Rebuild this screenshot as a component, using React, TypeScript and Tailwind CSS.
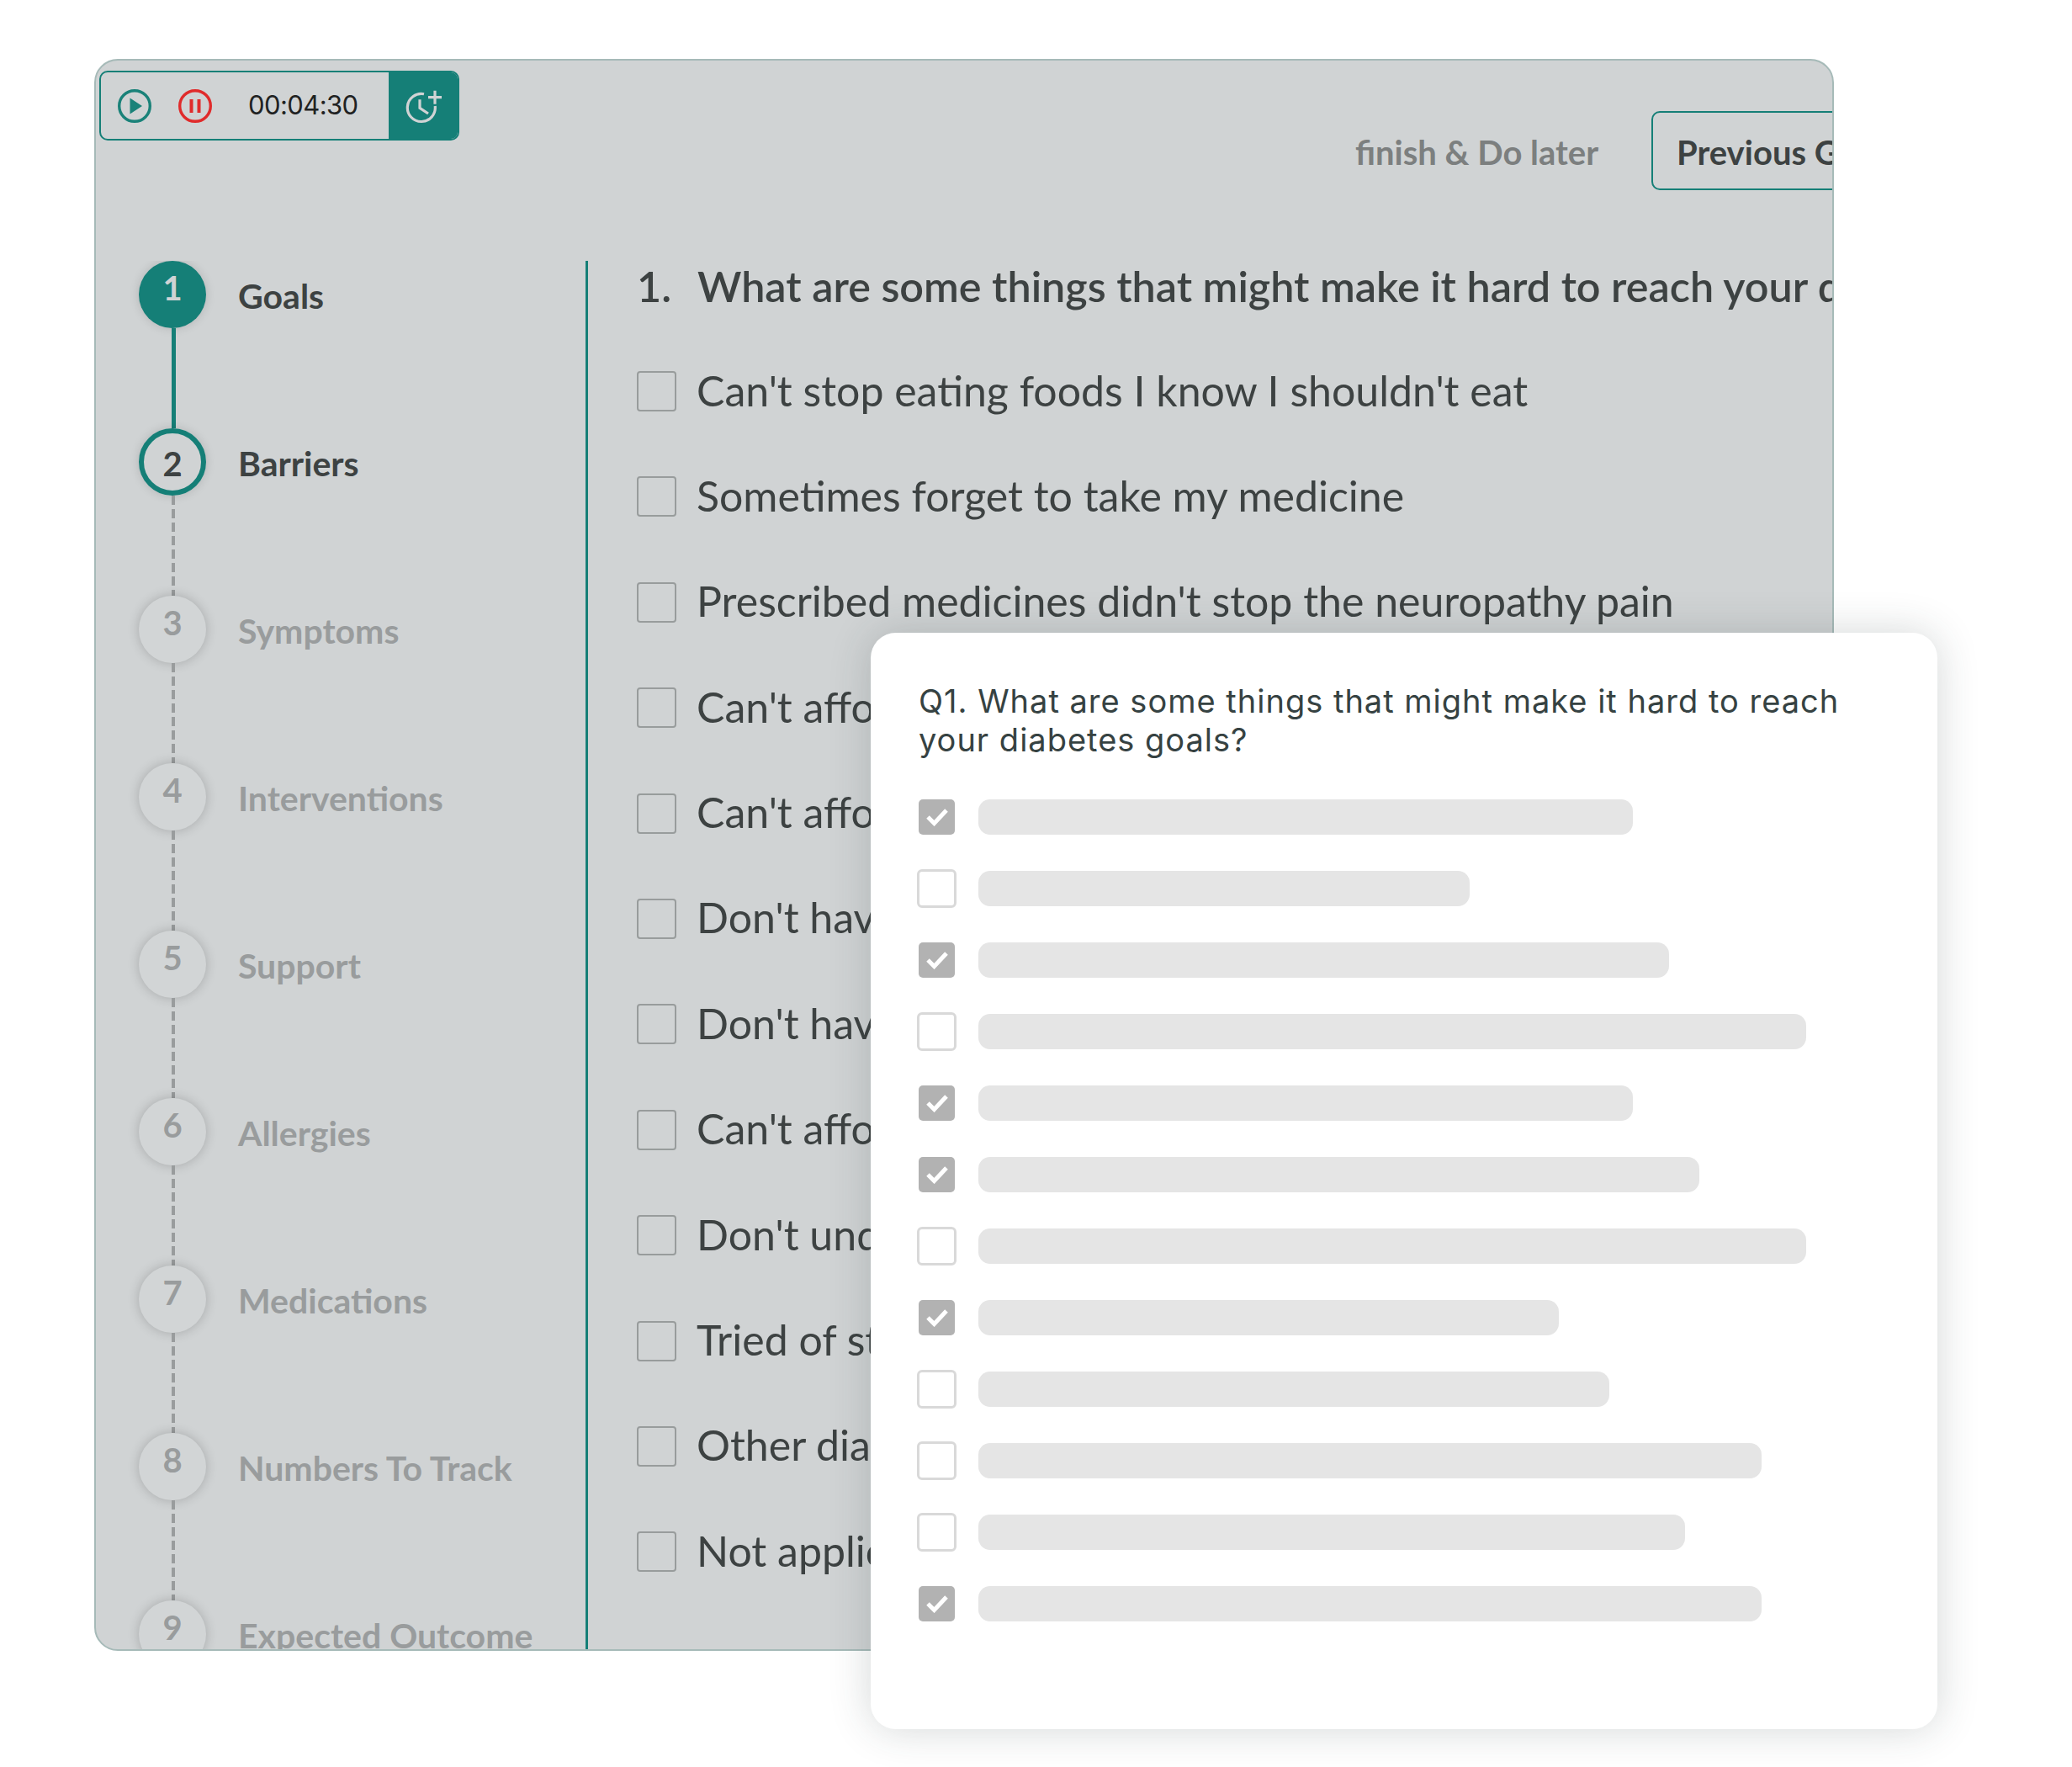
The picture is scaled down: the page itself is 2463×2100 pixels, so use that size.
const steps = ["Goals","Barriers","Symptoms","Interventions","Support","Allergies","Medications","Numbers To Track","Expected Outcome"];
const options = [
  "Can't stop eating foods I know I shouldn't eat",
  "Sometimes forget to take my medicine",
  "Prescribed medicines didn't stop the neuropathy pain",
  "Can't afford healthy food",
  "Can't afford my medicine",
  "Don't have time to exercise",
  "Don't have transportation",
  "Can't afford a gym membership",
  "Don't understand my treatment plan",
  "Tried of sticking to my diet",
  "Other diabetes conditions",
  "Not applicable",
];
const rows: [number, boolean][] = [[778,true],[584,false],[821,true],[984,false],[778,true],[857,true],[984,false],[690,true],[750,false],[931,false],[840,false],[931,true]];

function Step({ i, label }: { i: number; label: string }) {
  const done = i === 0;
  const current = i === 1;
  const active = done || current;
  return (
    <div className="flex h-[199px] shrink-0 gap-[38px]">
      <div className="flex w-[80px] flex-col items-center">
        <div
          className={
            done
              ? "flex h-[80px] w-[80px] shrink-0 items-start justify-center rounded-full bg-[#157f77] pt-[10px] text-[40px] leading-[44px] font-bold text-[#d0d3d4] shadow-[0_0_12px_rgba(0,0,0,0.15)]"
              : current
              ? "flex h-[80px] w-[80px] shrink-0 items-center justify-center rounded-full border-[6px] border-[#157f77] pt-[4px] text-[40px] leading-[44px] font-bold text-[#3d4242] shadow-[0_0_12px_rgba(0,0,0,0.15)]"
              : "flex h-[80px] w-[80px] shrink-0 items-start justify-center rounded-full bg-[#d2d5d6] pt-[10px] text-[40px] leading-[44px] font-bold text-[#999c9d] shadow-[0_0_14px_rgba(0,0,0,0.2)]"
          }
        >
          {i + 1}
        </div>
        {i < 8 &&
          (done ? (
            <div className="ml-[2px] h-[119px] w-[5px] bg-[#157f77]" />
          ) : (
            <div className="ml-[2px] h-[119px] w-[4px] bg-[repeating-linear-gradient(to_bottom,#999c9d_0_11px,transparent_11px_16px)]" />
          ))}
      </div>
      <div
        className={
          active
            ? "mt-[20px] h-[44px] text-[41px] leading-[44px] font-bold whitespace-nowrap text-[#3d4242]"
            : "mt-[20px] h-[44px] text-[41px] leading-[44px] font-bold whitespace-nowrap text-[#999c9d]"
        }
      >
        {label}
      </div>
    </div>
  );
}

export default function App() {
  return (
    <div className="relative h-[2100px] w-[2463px] overflow-hidden bg-white pt-[70px] pl-[112px] font-['Lato',sans-serif]">
      <div className="box-border flex h-[1892px] w-[2068px] flex-col overflow-hidden rounded-[28px] border-2 border-[#a6bab8] bg-[#d0d3d4]">
        <div className="flex h-[238px] shrink-0 items-start pt-[12px] pl-[4px]">
          <div className="flex h-[83px] w-[428px] shrink-0 overflow-hidden rounded-[10px] border-2 border-[#157f77]">
            <div className="flex flex-1 items-center pl-[20px]">
              <svg width="40" height="40" viewBox="0 0 40 40" className="shrink-0">
                <circle cx="20" cy="20" r="18.3" fill="none" stroke="#1a8279" strokeWidth="3.4" />
                <path d="M14.5 10.5 L29 20 L14.5 29.5 Z" fill="#1a8279" />
              </svg>
              <svg width="40" height="40" viewBox="0 0 40 40" className="ml-[32px] shrink-0">
                <circle cx="20" cy="20" r="18.3" fill="none" stroke="#e02b2b" strokeWidth="3.4" />
                <rect x="13.5" y="12" width="4" height="16" fill="#e02b2b" />
                <rect x="22.5" y="12" width="4" height="16" fill="#e02b2b" />
              </svg>
              <span className="ml-[43px] font-['Inter',sans-serif] text-[31px] tracking-[-0.6px] whitespace-nowrap text-[#1f2222]">00:04:30</span>
            </div>
            <div className="flex w-[82px] shrink-0 items-center justify-center bg-[#157f77]">
              <svg width="60" height="60" viewBox="0 0 60 60" fill="none" stroke="#d0d3d4" strokeWidth="3.2">
                <path d="M31 15.8 A16.5 16.5 0 1 0 44.2 30" />
                <path d="M26 22.3 V32.3 L36 39" />
                <path d="M44 11.7 V27.7 M36 19.7 H52" />
              </svg>
            </div>
          </div>
          <div className="mt-[48px] ml-[1065px] flex h-[94px] w-[289px] shrink-0 items-center pt-[3px] text-[40px] font-bold whitespace-nowrap text-[#7c7f7f]">finish &amp; Do later</div>
          <div className="mt-[48px] ml-[63px] flex h-[94px] w-[320px] shrink-0 items-center rounded-[10px] border-2 border-[#157f77] pt-[3px] pl-[28px] text-[40px] font-bold whitespace-nowrap text-[#3d4242]">Previous Goal</div>
        </div>
        <div className="flex min-h-0 flex-1 overflow-hidden">
          <div className="flex w-[582px] shrink-0 flex-col pl-[51px]">
            {steps.map((s, i) => (
              <Step key={s} i={i} label={s} />
            ))}
          </div>
          <div className="w-[3px] shrink-0 bg-[#157f77]" />
          <div className="flex min-w-0 flex-1 flex-col pl-[58px]">
            <div className="flex h-[60px] shrink-0 items-center gap-[38px] text-[50.3px] font-semibold whitespace-nowrap text-[#3d4242]">
              <span className="w-[34px]">1.</span>
              <span>What are some things that might make it hard to reach your diabetes goals?</span>
            </div>
            <div className="mt-[71px] flex flex-col gap-[77.4px]">
              {options.map((o) => (
                <div key={o} className="flex h-[48px] items-center gap-[24px] text-[50px] whitespace-nowrap text-[#3d4242]">
                  <div className="h-[48px] w-[47px] shrink-0 rounded-[4px] border-2 border-[#989c9c]" />
                  <span className="pb-[2px]">{o}</span>
                </div>
              ))}
            </div>
          </div>
        </div>
      </div>

      <div className="absolute top-[752px] left-[1035px] h-[1303px] w-[1268px] rounded-[30px] bg-white pt-[58px] pl-[57px] font-['Inter',sans-serif] shadow-[0_0_50px_rgba(40,55,55,0.2)]">
        <p className="text-[38px] leading-[46px] tracking-[1px] whitespace-nowrap text-[#364242]">
          Q1. What are some things that might make it hard to reach
          <br />
          your diabetes goals?
        </p>
        <div className="mt-[48px] flex flex-col gap-[43px]">
          {rows.map(([w, checked], i) => (
            <div key={i} className="flex h-[42px] items-center">
              {checked ? (
                <div className="flex h-[42px] w-[43px] shrink-0 items-center justify-center rounded-[5px] bg-[#b2b2b2]">
                  <svg width="26" height="22" viewBox="0 0 26 22" fill="none" stroke="#ffffff" strokeWidth="5">
                    <path d="M2 11 L9.5 18.5 L24 3" />
                  </svg>
                </div>
              ) : (
                <div className="-mx-[2px] box-border h-[46px] w-[47px] shrink-0 rounded-[6px] border-[3px] border-[#d9d9d9] bg-white" />
              )}
              <div className="ml-[28px] h-[42px] rounded-[14px] bg-[#e5e5e5]" style={{ width: w }} />
            </div>
          ))}
        </div>
      </div>
    </div>
  );
}
